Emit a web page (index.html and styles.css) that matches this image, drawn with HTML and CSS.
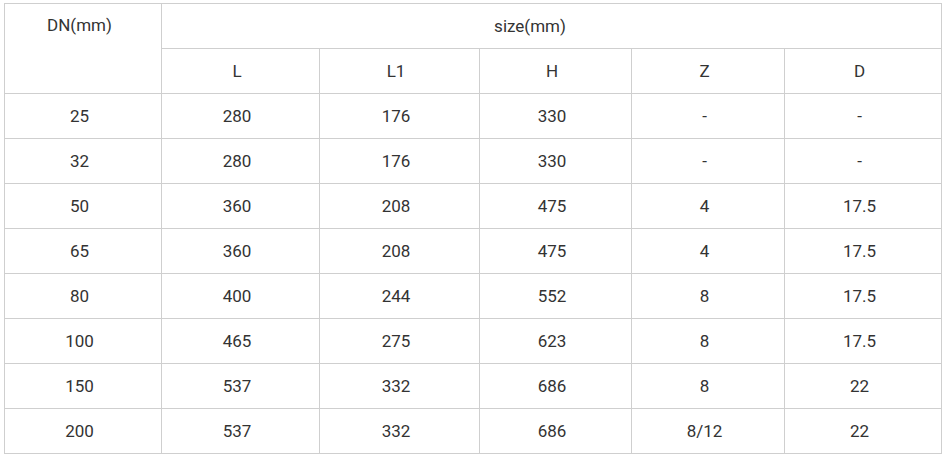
FILE: index.html
```html
<!DOCTYPE html>
<html>
<head>
<meta charset="utf-8">
<link rel="stylesheet" href="styles.css">
</head>
<body>
<div class="wrap">
<table class="spec">
<colgroup>
<col class="c1"><col class="c2"><col class="c3"><col class="c4"><col class="c5"><col class="c6">
</colgroup>
<tr><td rowspan="2" class="dn">DN(mm)</td><td colspan="5" class="size">size(mm)</td></tr>
<tr><td>L</td><td>L1</td><td>H</td><td>Z</td><td>D</td></tr>
<tr><td>25</td><td>280</td><td>176</td><td>330</td><td>-</td><td>-</td></tr>
<tr><td>32</td><td>280</td><td>176</td><td>330</td><td>-</td><td>-</td></tr>
<tr><td>50</td><td>360</td><td>208</td><td>475</td><td>4</td><td>17.5</td></tr>
<tr><td>65</td><td>360</td><td>208</td><td>475</td><td>4</td><td>17.5</td></tr>
<tr><td>80</td><td>400</td><td>244</td><td>552</td><td>8</td><td>17.5</td></tr>
<tr><td>100</td><td>465</td><td>275</td><td>623</td><td>8</td><td>17.5</td></tr>
<tr><td>150</td><td>537</td><td>332</td><td>686</td><td>8</td><td>22</td></tr>
<tr><td>200</td><td>537</td><td>332</td><td>686</td><td>8/12</td><td>22</td></tr>
</table>
</div>
</body>
</html>
```
FILE: styles.css
```css
html, body {
  margin: 0;
  padding: 0;
  background: #fff;
}
.wrap {
  padding: 3px 0 0 4px;
}
.spec {
  border-collapse: collapse;
  table-layout: fixed;
  width: 937px;
  font-family: Roboto, "Liberation Sans", sans-serif;
  font-size: 17px;
  color: #333;
}
.c1 { width: 157px; }
.c2 { width: 158px; }
.c3 { width: 160px; }
.c4 { width: 152px; }
.c5 { width: 153px; }
.c6 { width: 157px; }
.spec td {
  border: 1px solid #cfcfcf;
  height: 45px;
  padding: 0 7px 0 0;
  text-align: center;
  vertical-align: middle;
  box-sizing: border-box;
}
.spec td.dn {
  vertical-align: top;
  padding-top: 11px;
}
.spec td.size {
  padding-right: 43px;
}
```
